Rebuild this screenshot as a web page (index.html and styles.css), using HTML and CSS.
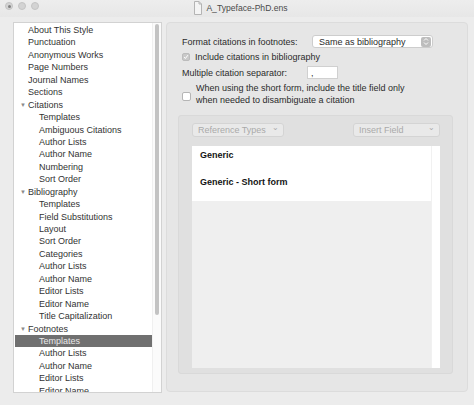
FILE: index.html
```html
<!DOCTYPE html>
<html>
<head>
<meta charset="utf-8">
<link rel="stylesheet" href="styles.css">
</head>
<body>
<div class="window">
  <div class="titlebar">
    <div class="lights">
      <span class="light first"></span>
      <span class="light"></span>
      <span class="light"></span>
    </div>
    <div class="title">
      <svg class="docicon" width="8" height="14" viewBox="0 0 8 14"><path d="M0.5 0.5 H5 L7.5 3 V13.5 H0.5 Z" fill="#f4f4f4" stroke="#b4b4b4" stroke-width="1"/><path d="M5 0.5 V3 H7.5" fill="none" stroke="#b4b4b4" stroke-width="1"/></svg>
      <span>A_Typeface-PhD.ens</span>
    </div>
  </div>
  <div class="content">
    <div class="sidebar">
      <ul class="list">
        <li class="top">About This Style</li>
        <li class="top">Punctuation</li>
        <li class="top">Anonymous Works</li>
        <li class="top">Page Numbers</li>
        <li class="top">Journal Names</li>
        <li class="top">Sections</li>
        <li class="group"><span class="tri">▼</span>Citations</li>
        <li class="child">Templates</li>
        <li class="child">Ambiguous Citations</li>
        <li class="child">Author Lists</li>
        <li class="child">Author Name</li>
        <li class="child">Numbering</li>
        <li class="child">Sort Order</li>
        <li class="group"><span class="tri">▼</span>Bibliography</li>
        <li class="child">Templates</li>
        <li class="child">Field Substitutions</li>
        <li class="child">Layout</li>
        <li class="child">Sort Order</li>
        <li class="child">Categories</li>
        <li class="child">Author Lists</li>
        <li class="child">Author Name</li>
        <li class="child">Editor Lists</li>
        <li class="child">Editor Name</li>
        <li class="child">Title Capitalization</li>
        <li class="group"><span class="tri">▼</span>Footnotes</li>
        <li class="child selected">Templates</li>
        <li class="child">Author Lists</li>
        <li class="child">Author Name</li>
        <li class="child">Editor Lists</li>
        <li class="child last">Editor Name</li>
      </ul>
      <div class="scroller"><div class="thumb"></div></div>
    </div>
    <div class="panel">
      <div class="row row1">
        <span class="label l1">Format citations in footnotes:</span>
        <div class="popup">
          <span>Same as bibliography</span>
          <span class="stepper"><svg width="6" height="9" viewBox="0 0 6 9"><path d="M1 3.5 L3 1.5 L5 3.5 M1 5.5 L3 7.5 L5 5.5" fill="none" stroke="#fff" stroke-width="1"/></svg></span>
        </div>
      </div>
      <div class="row row2">
        <span class="check checked"><svg width="8" height="8" viewBox="0 0 8 8"><path d="M1.5 4 L3.2 6 L6.5 1.5" fill="none" stroke="#fff" stroke-width="1.3"/></svg></span>
        <span class="label">Include citations in bibliography</span>
      </div>
      <div class="row row3">
        <span class="label l3">Multiple citation separator:</span>
        <div class="field">,</div>
      </div>
      <div class="row row4">
        <span class="check"></span>
        <span class="label multi">When using the short form, include the title field only<br>when needed to disambiguate a citation</span>
      </div>
      <div class="inner">
        <div class="popups">
          <div class="dpop p1"><span>Reference Types</span><span class="chev">⌄</span></div>
          <div class="dpop p2"><span>Insert Field</span><span class="chev">⌄</span></div>
        </div>
        <div class="textview">
          <div class="tv-top">
            <div class="doc">
              <div class="tpl">Generic</div>
              <div class="tpl">Generic - Short form</div>
            </div>
            <div class="tv-side"></div>
          </div>
          <div class="tv-bottom">
            <div class="tv-fill"></div>
            <div class="tv-side"></div>
          </div>
        </div>
      </div>
    </div>
  </div>
</div>
</body>
</html>
```
FILE: styles.css
```css
* { box-sizing: border-box; }
html, body { margin: 0; padding: 0; }
body {
  width: 474px;
  height: 405px;
  overflow: hidden;
  background: #ececec;
  font-family: "Liberation Sans", Arial, sans-serif;
  font-size: 9px;
  color: #2b2b2b;
}
.window { width: 474px; height: 405px; }
.titlebar {
  height: 17px;
  position: relative;
  display: flex;
  align-items: center;
  justify-content: center;
  background: linear-gradient(#ededed, #e7e7e7);
}
.lights {
  position: absolute;
  left: 5px;
  top: 2px;
  display: flex;
  gap: 5px;
}
.light {
  width: 8px;
  height: 8px;
  border-radius: 50%;
  background: #d3d3d3;
  border: 1px solid #c4c4c4;
  display: flex;
  align-items: center;
  justify-content: center;
}
.light.first::after {
  content: "";
  width: 3px;
  height: 3px;
  border-radius: 50%;
  background: #808080;
}
.title {
  display: flex;
  align-items: center;
  gap: 4px;
  padding-left: 8px;
  margin-top: -2px;
  font-size: 8.6px;
  color: #4a4a4a;
}
.docicon { display: block; }
.content {
  display: flex;
  padding: 5px 0 0 13px;
  gap: 4px;
}
.sidebar {
  width: 149px;
  height: 371px;
  border: 1px solid #d2d2d2;
  background: #fff;
  display: flex;
  overflow: hidden;
}
.list {
  list-style: none;
  margin: 0;
  padding: 1px 0 0 1px;
  width: 138px;
  color: #333;
}
.list li {
  height: 12.45px;
  line-height: 12.45px;
  white-space: nowrap;
}
.list .last { height: 10px; overflow: hidden; }
.list .top { padding-left: 13px; }
.list .group { padding-left: 5px; }
.list .child { padding-left: 24px; }
.tri {
  display: inline-block;
  width: 8px;
  font-size: 6px;
  color: #8a8a8a;
  vertical-align: top;
  line-height: 12px;
}
.list .selected {
  background: #707070;
  color: #e9e9e9;
}
.scroller {
  width: 9px;
  padding: 1px 0 0 2px;
  background: #fbfbfb;
  border-left: 1px solid #f0f0f0;
}
.thumb {
  width: 4px;
  height: 291px;
  border-radius: 2px;
  background: #c3c3c3;
}
.panel {
  width: 302px;
  height: 370px;
  border: 1px solid #dcdcdc;
  border-radius: 4px;
  background: #e6e6e6;
  padding: 12px 0 0 11px;
}
.row { display: flex; padding-left: 4px; }
.row1 { height: 13px; align-items: center; }
.l1 { width: 130px; }
.popup {
  width: 121px;
  height: 13px;
  background: #fff;
  border: 1px solid #cdcdcd;
  border-radius: 3px;
  display: flex;
  align-items: center;
  justify-content: space-between;
  padding: 0 1px 0 6px;
  color: #2b2b2b;
}
.stepper {
  width: 10px;
  height: 10px;
  border-radius: 2px;
  background: #bdbdbd;
  display: flex;
  align-items: center;
  justify-content: center;
}
.row2 { margin-top: 4px; height: 10px; align-items: center; gap: 5px; }
.check {
  width: 8px;
  height: 8px;
  flex: none;
  border-radius: 2px;
  background: #fff;
  border: 1px solid #b5b5b5;
  display: flex;
  align-items: center;
  justify-content: center;
}
.check svg { display: block; }
.check.checked { background: #c9c9c9; border-color: #bcbcbc; }
.row3 { margin-top: 4px; height: 13px; align-items: center; }
.l3 { width: 125px; }
.field {
  width: 31px;
  height: 13px;
  background: #fff;
  border: 1px solid #d0d0d0;
  padding: 1px 0 0 3px;
  line-height: 11px;
}
.row4 { margin-top: 3px; align-items: flex-start; gap: 5px; }
.row4 .check { margin-top: 10px; width: 9px; height: 9px; }
.multi { line-height: 12px; }
.inner {
  margin-top: 9px;
  width: 275px;
  height: 259px;
  background: #e0e0e0;
  border: 1px solid #d9d9d9;
  border-radius: 3px;
  padding: 7px 0 0 13px;
}
.popups {
  width: 248px;
  display: flex;
  justify-content: space-between;
}
.dpop {
  height: 14px;
  border: 1px solid #d4d4d4;
  border-radius: 3px;
  background: #e9e9e9;
  color: #a9a9a9;
  display: flex;
  align-items: center;
  justify-content: space-between;
  padding: 0 4px 0 5px;
}
.p1 { width: 92px; }
.p2 { width: 87px; }
.chev { font-size: 8px; line-height: 6px; margin-top: -4px; }
.textview {
  margin-top: 9px;
  width: 248px;
  height: 222px;
  display: flex;
  flex-direction: column;
}
.tv-top { display: flex; height: 55px; background: #fff; }
.doc {
  flex: 1;
  padding: 4px 0 0 8px;
}
.tpl {
  font-weight: bold;
  color: #141414;
  height: 27px;
  line-height: 10px;
}
.tv-side {
  width: 9px;
  background: #fff;
  border-left: 1px solid #f1f1f1;
}
.tv-bottom { display: flex; flex: 1; }
.tv-fill { flex: 1; background: #efefef; }
```
